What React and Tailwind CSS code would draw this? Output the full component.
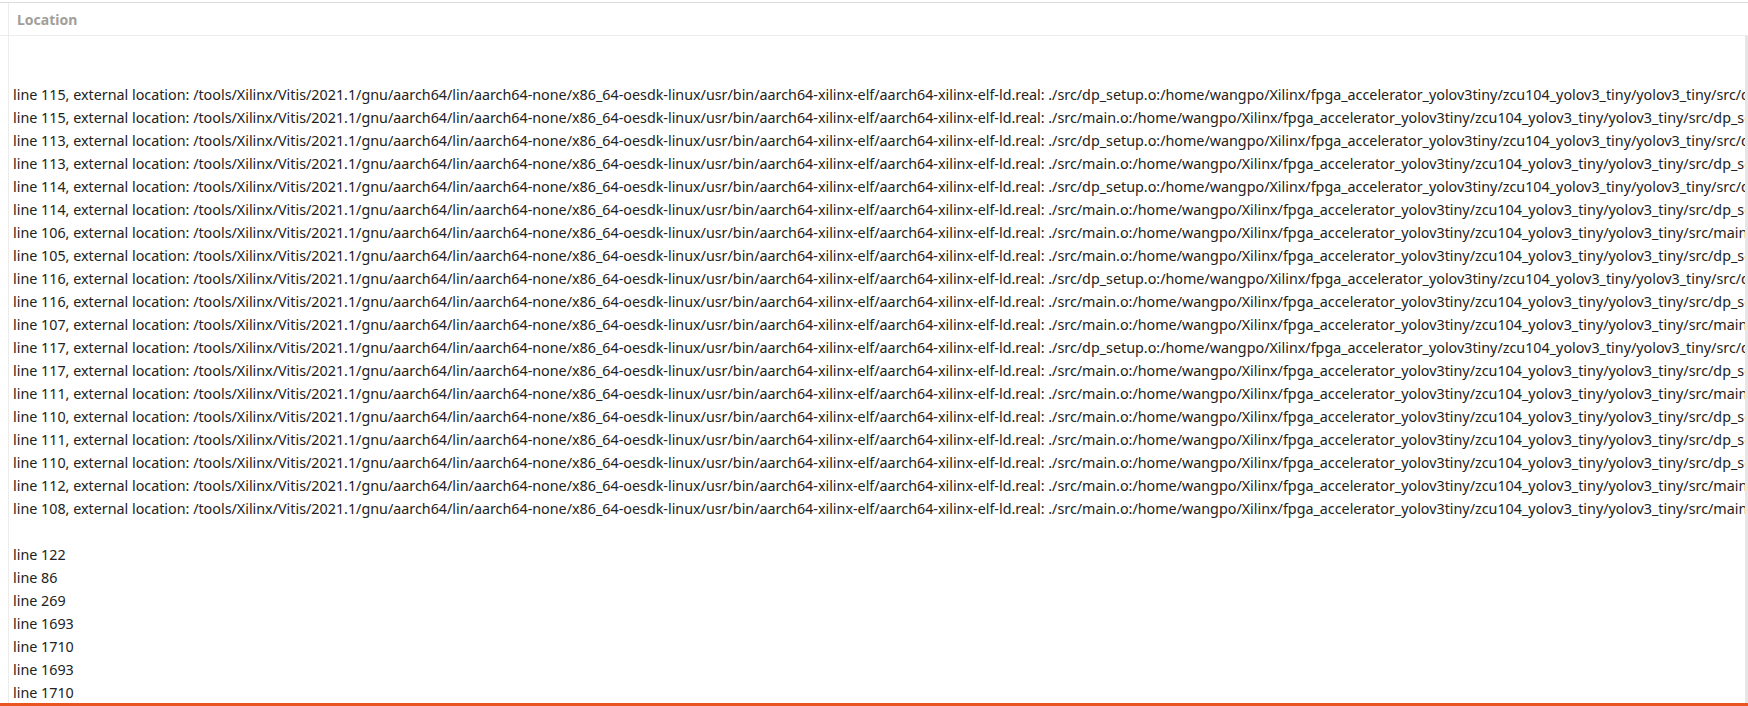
import React from "react";

const TOOL =
  "/tools/Xilinx/Vitis/2021.1/gnu/aarch64/lin/aarch64-none/x86_64-oesdk-linux/usr/bin/aarch64-xilinx-elf/aarch64-xilinx-elf-ld.real: ";
const BASE = "/home/wangpo/Xilinx/fpga_accelerator_yolov3tiny/zcu104_yolov3_tiny/yolov3_tiny/src/";

const entries = [
  [115, "dp_setup", "dp_setup.c"],
  [115, "main", "dp_setup.h"],
  [113, "dp_setup", "dp_setup.c"],
  [113, "main", "dp_setup.h"],
  [114, "dp_setup", "dp_setup.c"],
  [114, "main", "dp_setup.h"],
  [106, "main", "main.c"],
  [105, "main", "dp_setup.h"],
  [116, "dp_setup", "dp_setup.c"],
  [116, "main", "dp_setup.h"],
  [107, "main", "main.c"],
  [117, "dp_setup", "dp_setup.c"],
  [117, "main", "dp_setup.h"],
  [111, "main", "main.c"],
  [110, "main", "dp_setup.h"],
  [111, "main", "dp_setup.h"],
  [110, "main", "dp_setup.h"],
  [112, "main", "main.c"],
  [108, "main", "main.c"],
];

const shortLines = [122, 86, 269, 1693, 1710, 1693, 1710];

const App = () => {
  return (
    <div className="w-[1748px] h-[706px] bg-white flex flex-col overflow-hidden font-['Noto_Sans',sans-serif] text-[#222222]">
      {/* tail of the pane above */}
      <div className="h-[2px] bg-white" />
      <div className="h-px bg-[#dcdcdc]" />

      {/* column header */}
      <div className="flex h-[33px] border-b border-[#ededed]">
        <div className="w-[9px] border-r border-[#ececec]" />
        <div className="flex items-center pl-[8px] text-[14px] font-bold text-[#a29e9a]">Location</div>
      </div>

      {/* results */}
      <div className="flex-1 flex min-h-0">
        <div className="w-[9px] border-r border-[#ececec]" />
        <div className="flex-1 overflow-hidden pl-[4px] pt-[1px] text-[14.32px] leading-[23px] whitespace-nowrap">
          <div className="h-[23px]" />
          <div className="h-[23px]" />
          {entries.map(([line, obj, src], i) => (
            <div key={i}>
              line {line}, external location: {TOOL}./src/{obj}.o:{BASE}{src}
            </div>
          ))}
          <div className="h-[23px]" />
          {shortLines.map((n, i) => (
            <div key={i}>line {n}</div>
          ))}
        </div>
        <div className="w-[3px] bg-[#e6e6e6]" />
      </div>

      <div className="h-[3px] bg-[#e95420]" />
    </div>
  );
};

export default App;
